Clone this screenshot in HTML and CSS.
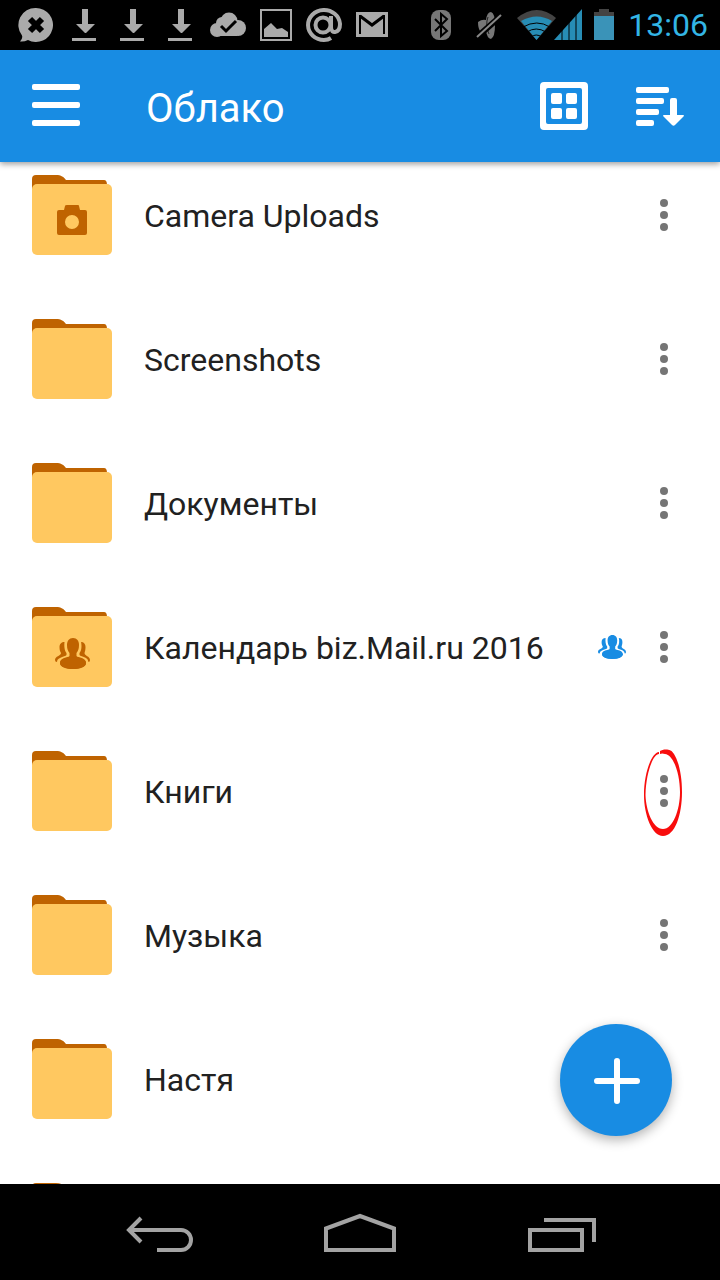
FILE: index.html
```html
<!DOCTYPE html>
<html lang="ru">
<head>
<meta charset="utf-8">
<meta name="viewport" content="width=device-width, initial-scale=1">
<title>Облако</title>
<link rel="stylesheet" href="styles.css">
</head>
<body>
<svg class="defs" aria-hidden="true">
  <symbol id="folder" viewBox="0 0 80 80">
    <path fill="#bf6300" d="M0 14V4Q0 0 4 0H24C29 0 32 2 34 5H72Q75 5 75 10V14Z"/>
    <rect y="9" width="80" height="71" rx="5" fill="#ffc860"/>
  </symbol>
  <symbol id="people" viewBox="0 0 35 31" preserveAspectRatio="none">
    <path d="M18 0C22 0 24 3 24 7C24 11 23 13 21.500 15V18C23 20 31 19 31 25C31 29 25 31 18 31C11 31 5 29 5 25C5 19 13 20 14.500 18V15C13 13 12 11 12 7C12 3 14 0 18 0Z"/>
    <ellipse cx="18" cy="25" rx="13" ry="6"/>
    <path d="M9.500 4C6.500 4 4.500 6 4.500 9C4.500 12 5 13 6 15C6 18 0 18 0 22Q0 24 2 24Q2 21 5 20C8 18.500 11 18 11.500 17V15C9.500 13 9 8 9.500 4Z"/>
    <path d="M26 4C29 4 30.500 6 30.500 9C30.500 12 30 13 29.500 15C29.500 18 35 18 35 22Q35 24 33.500 24Q33 21 31 20C28 18.500 25 18 24.500 17V15C26.500 13 27 8 26 4Z"/>
  </symbol>
  <symbol id="dots" viewBox="0 0 8 32">
    <circle cx="4" cy="4" r="4"/><circle cx="4" cy="16" r="4"/><circle cx="4" cy="28" r="4"/>
  </symbol>
  <symbol id="download" viewBox="0 0 48 50">
    <path d="M22 9h6v15h7l-9 9h-1l-9-9h6zM12 38h24v3H12z"/>
  </symbol>
</svg>
<div class="screen">
  <div class="status">
    <div class="notices">
      <svg viewBox="0 0 48 50"><path d="M24 8a17 17 0 1 1-8 32q-4 2-8 1.500q3-3 2-6A17 17 0 0 1 24 8z"/><path d="M18 19l12 12M30 19l-12 12" stroke="#000" stroke-width="6"/></svg>
      <svg><use href="#download"/></svg>
      <svg><use href="#download"/></svg>
      <svg><use href="#download"/></svg>
      <svg viewBox="0 0 48 50"><circle cx="13" cy="30" r="7"/><circle cx="18" cy="23" r="6"/><circle cx="25" cy="21" r="8.500"/><circle cx="34" cy="28" r="8"/><path d="M13 26h20v10H13z"/><path d="M17 26l5 5 10-10" fill="none" stroke="#000" stroke-width="3"/></svg>
      <svg viewBox="0 0 48 50"><path fill-rule="evenodd" d="M8 9h32v32H8zM10 11v28h28V11z"/><path d="M12 37v-8l7-6 6 6 5-1 6 4v5z"/></svg>
      <svg viewBox="0 0 48 50"><g fill="none" stroke="#aaa" stroke-width="4"><circle cx="23" cy="25" r="7.500"/><path d="M31 16v11c0 8 9 6 9-3A16 15 0 1 0 24 40q4 0 7-2"/></g></svg>
      <svg viewBox="0 0 48 50"><path d="M8 12h32v25H8z"/><path d="M12 34V15M36 34V15" stroke="#000" stroke-width="2"/><path d="M12 16l12 9 12-9" fill="none" stroke="#000" stroke-width="3"/></svg>
    </div>
    <div class="system">
      <svg viewBox="0 0 48 50"><rect x="13" y="10" width="20" height="30" rx="8" fill="#777"/><path d="M17 19l12 12-6 5V14l6 5-12 12" fill="none" stroke="#000" stroke-width="2"/></svg>
      <svg viewBox="0 0 48 50"><path fill="#777" d="M12 22q4-3 8-2q1-8 5-8 4 1 4 13t-4 14q-4-1-5-8h-6q-2-3-2-9z"/><path d="M22 17q-3 8 1 17" fill="none" stroke="#222"/><path d="M11 37L36 15" stroke="#000" stroke-width="6"/><path d="M11 37L35 15" stroke="#888" stroke-width="2"/></svg>
      <svg class="signal" viewBox="0 0 72 50"><path d="M3 18q20-16 39 0L22.500 40z" fill="#444"/><path d="M7 21q16-9 31 0L22.500 40z" fill="#278db5"/><path d="M9 27q14-8 27 0M13 32q9-6 19 0M17 37q5-4 11 0" fill="none" stroke="#000" stroke-width="1"/><path d="M40 40L68 9v31z" fill="#278db5"/><path d="M48 10v32M55 10v32M62 10v32" stroke="#000" stroke-width="1"/></svg>
      <svg class="battery" viewBox="0 0 38 50"><path d="M8 12h5V9h10v3h5v4H8z" fill="#444"/><path d="M8 16h20v24H8z" fill="#3a93b8"/></svg>
      <time class="clock">13:06</time>
    </div>
  </div>

  <header class="appbar">
    <button class="icon-button" aria-label="Меню"><svg viewBox="0 0 48 48"><rect y="2" width="48" height="6" rx="2"/><rect y="20" width="48" height="6" rx="2"/><rect y="38" width="48" height="6" rx="2"/></svg></button>
    <h1 class="title">Облако</h1>
    <div class="actions">
      <button class="icon-button" aria-label="Сетка"><svg viewBox="0 0 48 48"><path fill-rule="evenodd" d="M4 0H44Q48 0 48 4V44Q48 48 44 48H4Q0 48 0 44V4Q0 0 4 0ZM8 6Q6 6 6 8V40Q6 42 8 42H40Q42 42 42 40V8Q42 6 40 6Z"/><rect x="11" y="11" width="11" height="11" rx="2"/><rect x="26" y="11" width="11" height="11" rx="2"/><rect x="11" y="26" width="11" height="11" rx="2"/><rect x="26" y="26" width="11" height="11" rx="2"/></svg></button>
      <button class="icon-button" aria-label="Сортировка"><svg viewBox="0 0 48 48"><rect y="5" width="33" height="6" rx="2"/><rect y="16" width="28" height="6" rx="2"/><rect y="27" width="23" height="6" rx="2"/><rect y="38" width="18" height="6" rx="2"/><path d="M34 18q0-2 2-2h3q2 0 2 2v15h6q2 0 0 2l-8 8q-1.500 1.500-3 0l-8-8q-2-2 0-2h6z"/></svg></button>
    </div>
  </header>

  <main class="content">
    <ul class="files">
      <li class="file">
        <svg class="folder" viewBox="0 0 80 80"><use href="#folder"/><path fill="#bf6300" fill-rule="evenodd" d="M27 35h5l1-4q0-1 2-1h11q1 0 1 1l1 4h5q2 0 2 2v21q0 2-2 2H27q-2 0-2-2V37q0-2 2-2zM40 40a7 7 0 1 0 0 14a7 7 0 1 0 0-14z"/></svg>
        <span class="name">Camera Uploads</span>
        <button class="more" aria-label="Действия"><svg><use href="#dots"/></svg></button>
      </li>
      <li class="file">
        <svg class="folder"><use href="#folder"/></svg>
        <span class="name">Screenshots</span>
        <button class="more" aria-label="Действия"><svg><use href="#dots"/></svg></button>
      </li>
      <li class="file">
        <svg class="folder"><use href="#folder"/></svg>
        <span class="name">Документы</span>
        <button class="more" aria-label="Действия"><svg><use href="#dots"/></svg></button>
      </li>
      <li class="file">
        <svg class="folder" viewBox="0 0 80 80"><use href="#folder"/><use href="#people" x="23" y="31" width="35" height="31" fill="#bf6300"/></svg>
        <span class="name">Календарь biz.Mail.ru 2016</span>
        <svg class="shared"><use href="#people"/></svg>
        <button class="more" aria-label="Действия"><svg><use href="#dots"/></svg></button>
      </li>
      <li class="file">
        <svg class="folder"><use href="#folder"/></svg>
        <span class="name">Книги</span>
        <button class="more" aria-label="Действия"><svg><use href="#dots"/></svg>
          <svg class="mark" viewBox="0 0 38 88"><path fill="#f80d0d" fill-rule="evenodd" d="M16 2C19 0 27-1 30 5C35 13 38 27 38 43C38 66 31 87 19 87C8 87 0 66 0 46C0 25 7 4 15 3L15 5C9 5 2 24 1.500 46C2 62 9 80 19 80C29 80 36 61 36 43C36 26 30 6 21 5Q18 4 16 5Z"/></svg>
        </button>
      </li>
      <li class="file">
        <svg class="folder"><use href="#folder"/></svg>
        <span class="name">Музыка</span>
        <button class="more" aria-label="Действия"><svg><use href="#dots"/></svg></button>
      </li>
      <li class="file">
        <svg class="folder"><use href="#folder"/></svg>
        <span class="name">Настя</span>
      </li>
      <li class="file">
        <svg class="folder"><use href="#folder"/></svg>
      </li>
    </ul>
    <button class="fab" aria-label="Добавить"><svg viewBox="0 0 48 48"><path d="M5 25h40M25 5v40" stroke="#fff" stroke-width="6" stroke-linecap="round"/></svg></button>
  </main>

  <nav class="navbar">
    <button class="nav-button" aria-label="Назад"><svg viewBox="0 0 72 48"><path d="M4 20H57a10 10 0 0 1 0 20H33M17 8L5 20l12 12"/></svg></button>
    <button class="nav-button" aria-label="Домой"><svg viewBox="0 0 72 48"><path d="M2 40V18.500L36 6l34 12.500V40z"/></svg></button>
    <button class="nav-button" aria-label="Недавние"><svg viewBox="0 0 72 48"><path d="M6 20h52v20H6zM20 10h50v22"/></svg></button>
  </nav>
</div>
</body>
</html>
```

FILE: styles.css
```css
* {
  box-sizing: border-box;
}

body {
  margin: 0;
  background: #fff;
  color: #212121;
  font-family: Roboto, "Noto Sans", sans-serif;
}

button {
  padding: 0;
  border: 0;
  background: none;
  cursor: pointer;
}

svg {
  display: block;
}

.defs {
  position: absolute;
  width: 0;
  height: 0;
}

.screen {
  display: flex;
  flex-direction: column;
  height: 100vh;
}

.status {
  display: flex;
  justify-content: space-between;
  flex: none;
  height: 50px;
  padding: 0 12px;
  background: #000;
}

.notices,
.system {
  display: flex;
  align-items: center;
}

.status svg {
  width: 48px;
  height: 50px;
  fill: #aaa;
}

.status .signal {
  width: 72px;
}

.status .battery {
  width: 38px;
}

.clock {
  margin-left: 4px;
  color: #33b5e5;
  font-size: 32px;
  line-height: 50px;
}

.appbar {
  position: relative;
  z-index: 1;
  display: flex;
  align-items: center;
  flex: none;
  gap: 64px;
  height: 112px;
  padding: 0 36px 0 32px;
  background: #188ce3;
  box-shadow: 0 2px 6px rgba(0, 0, 0, 0.4);
}

.icon-button svg {
  width: 48px;
  height: 48px;
  fill: #fff;
}

.title {
  flex: 1;
  margin: 0;
  padding: 6px 0 0 2px;
  color: #fff;
  font-size: 40px;
  font-weight: 400;
  line-height: 48px;
}

.actions {
  display: flex;
  gap: 48px;
}

.content {
  position: relative;
  flex: 1;
  min-height: 0;
}

.files {
  display: flex;
  flex-direction: column;
  gap: 64px;
  height: 100%;
  margin: 0;
  padding: 13px 32px 0;
  overflow: hidden;
  list-style: none;
}

.file {
  display: flex;
  align-items: center;
  flex: none;
}

.folder {
  flex: none;
  width: 80px;
  height: 80px;
}

.name {
  flex: 1;
  margin-left: 32px;
  padding-top: 2px;
  font-size: 32px;
  line-height: 40px;
}

.shared {
  width: 28px;
  height: 24px;
  margin-right: 14px;
  fill: #188ce3;
}

.more {
  position: relative;
  display: grid;
  place-items: center;
  width: 48px;
  height: 80px;
}

.more svg {
  width: 8px;
  height: 32px;
  fill: #757575;
}

.more .mark {
  position: absolute;
  top: -2px;
  left: 4px;
  width: 38px;
  height: 88px;
}

.fab {
  position: absolute;
  right: 48px;
  bottom: 48px;
  display: grid;
  place-items: center;
  width: 112px;
  height: 112px;
  border-radius: 50%;
  background: #188ce3;
  box-shadow: 0 4px 12px rgba(0, 0, 0, 0.3);
}

.fab svg {
  width: 48px;
  height: 48px;
}

.navbar {
  display: flex;
  justify-content: center;
  flex: none;
  height: 96px;
  padding: 4px 60px 0;
  background: #000;
}

.nav-button {
  display: grid;
  place-items: center;
  flex: 1;
}

.nav-button svg {
  width: 72px;
  height: 48px;
  fill: none;
  stroke: #a3a3a3;
  stroke-width: 4;
}
```
